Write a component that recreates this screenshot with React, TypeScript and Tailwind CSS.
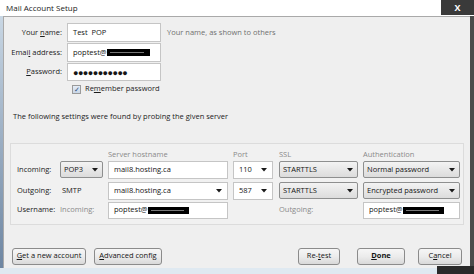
import React from "react";

const font = { fontFamily: '"Open Sans", "Noto Sans", sans-serif' };

function Arrow() {
  return (
    <svg width="6" height="4" viewBox="0 0 6 4" className="shrink-0">
      <path d="M0 0 L6 0 L3 3.5 Z" fill="#1a1a1a" />
    </svg>
  );
}

function Redacted({ w }: { w: number }) {
  return (
    <span className="relative inline-block h-[7px] bg-black align-middle" style={{ width: w }}>
      <span className="absolute left-[8%] right-[12%] top-[3px] h-px bg-[#777]" />
    </span>
  );
}

function Select({ w, children }: { w: number; children: React.ReactNode }) {
  return (
    <div
      className="flex h-[17px] items-center justify-between rounded-[2px] border border-[#8e8f8f] bg-gradient-to-b from-[#f3f3f3] to-[#dcdcdc] pl-[3px] pr-[4px] text-[#151515]"
      style={{ width: w }}
    >
      <span>{children}</span>
      <Arrow />
    </div>
  );
}

function Field({
  w,
  h = 17,
  arrow = false,
  children,
}: {
  w: number;
  h?: number;
  arrow?: boolean;
  children?: React.ReactNode;
}) {
  return (
    <div
      className="flex items-center justify-between border border-[#c5c5c5] bg-white pl-[5px] pr-[5px] text-[#151515]"
      style={{ width: w, height: h }}
    >
      <span className="flex items-center whitespace-nowrap">{children}</span>
      {arrow && <Arrow />}
    </div>
  );
}

function Btn({ w, children, bold = false }: { w: number; children: React.ReactNode; bold?: boolean }) {
  return (
    <div
      className={`flex h-[17px] items-center justify-center rounded-[3px] border border-[#8b8b8b] bg-gradient-to-b from-[#f6f6f6] via-[#ececec] to-[#d9d9d9] text-[#151515] ${bold ? "font-bold" : ""}`}
      style={{ width: w }}
    >
      {children}
    </div>
  );
}

export default function App() {
  return (
    <div className="relative h-[274px] w-[474px] overflow-hidden bg-[#dfe9f1] text-[7.5px] leading-none" style={font}>
      {/* title bar */}
      <div className="flex h-[16px] items-center bg-white pl-[6px] text-[8px] text-[#222]">Mail Account Setup</div>
      <div className="absolute right-0 top-0 flex h-[15px] w-[33px] items-center justify-center bg-[#3a3a3a] text-[9px] font-bold text-white">
        X
      </div>

      <div className="flex h-[252px]">
        <div className="w-[3px] bg-gradient-to-b from-[#c9d7e4] to-[#6e86a2]" />
        <div className="relative flex w-[467px] flex-col border-l border-t border-[#a9a9a9] bg-[#efefef]">
          {/* account fields */}
          <div className="flex flex-col gap-[1px] pt-[6px] text-[#1b1b1b]">
            <div className="flex h-[19px] items-center">
              <div className="w-[58px] text-right">
                Your <u>n</u>ame:
              </div>
              <div className="ml-[5px]">
                <Field w={94} h={19}>Test&nbsp; POP</Field>
              </div>
              <div className="ml-[6px] text-[#6f6f6f]">Your name, as shown to others</div>
            </div>
            <div className="flex h-[19px] items-center">
              <div className="w-[58px] text-right">
                Emai<u>l</u> address:
              </div>
              <div className="ml-[5px]">
                <Field w={94} h={19}>
                  poptest@<Redacted w={43} />
                </Field>
              </div>
            </div>
            <div className="flex h-[18px] items-center">
              <div className="w-[58px] text-right">
                <u>P</u>assword:
              </div>
              <div className="ml-[5px]">
                <Field w={94} h={18}>
                  <span className="text-[9px] tracking-[-0.5px]">●●●●●●●●●●●</span>
                </Field>
              </div>
            </div>
            <div className="mt-[2px] flex h-[10px] items-center pl-[68px]">
              <div className="flex h-[9px] w-[9px] items-center justify-center border border-[#9a9a9a] bg-gradient-to-b from-[#e4ecf6] to-[#c9d6e6] text-[7px] text-[#2c4e7a]">
                ✓
              </div>
              <div className="ml-[4px]">
                Re<u>m</u>ember password
              </div>
            </div>
          </div>

          <div className="mt-[19px] pl-[9px] text-[#1b1b1b]">The following settings were found by probing the given server</div>

          {/* server group */}
          <div className="ml-[6px] mt-[22px] h-[82px] w-[454px] border border-[#dcdcdc] bg-[#f1f1f1] pl-[6px] text-[#1b1b1b]">
            <div className="flex h-[17px] items-end pb-[2px] text-[#8a8a8a]">
              <div className="w-[91px]" />
              <div className="w-[125px]">Server hostname</div>
              <div className="w-[46px]">Port</div>
              <div className="w-[84px]">SSL</div>
              <div>Authentication</div>
            </div>
            <div className="flex h-[18px] items-center">
              <div className="w-[43px]">Incoming:</div>
              <div className="w-[48px]">
                <Select w={43}>POP3</Select>
              </div>
              <div className="w-[125px]">
                <Field w={120} h={18}>mail8.hosting.ca</Field>
              </div>
              <div className="w-[46px]">
                <Field w={40} h={18} arrow>
                  110
                </Field>
              </div>
              <div className="w-[84px]">
                <Select w={79}>STARTTLS</Select>
              </div>
              <Select w={97}>Normal password</Select>
            </div>
            <div className="mt-[3px] flex h-[18px] items-center">
              <div className="w-[43px]">Outgoing:</div>
              <div className="w-[48px] pl-[2px]">SMTP</div>
              <div className="w-[125px]">
                <Field w={120} h={18} arrow>
                  mail8.hosting.ca
                </Field>
              </div>
              <div className="w-[46px]">
                <Field w={40} h={18} arrow>
                  587
                </Field>
              </div>
              <div className="w-[84px]">
                <Select w={79}>STARTTLS</Select>
              </div>
              <Select w={97}>Encrypted password</Select>
            </div>
            <div className="mt-[2px] flex h-[17px] items-center">
              <div className="w-[43px]">Username:</div>
              <div className="w-[48px] text-[#8a8a8a]">Incoming:</div>
              <div className="w-[171px]">
                <Field w={120} h={17}>
                  poptest@<Redacted w={41} />
                </Field>
              </div>
              <div className="w-[84px] text-[#8a8a8a]">Outgoing:</div>
              <Field w={97} h={17}>
                poptest@<Redacted w={41} />
              </Field>
            </div>
          </div>

          {/* buttons */}
          <div className="mt-[23px] flex items-center pl-[8px]">
            <Btn w={74}>
              <span>
                <u>G</u>et a new account
              </span>
            </Btn>
            <div className="ml-[8px]">
              <Btn w={68}>
                <span>
                  <u>A</u>dvanced config
                </span>
              </Btn>
            </div>
            <div className="ml-[136px]">
              <Btn w={42}>
                <span>
                  Re-<u>t</u>est
                </span>
              </Btn>
            </div>
            <div className="ml-[17px]">
              <Btn w={48} bold>
                <span>
                  <u>D</u>one
                </span>
              </Btn>
            </div>
            <div className="ml-[13px]">
              <Btn w={44}>
                <span>
                  C<u>a</u>ncel
                </span>
              </Btn>
            </div>
          </div>
        </div>
        <div className="w-[4px] bg-[#4b4b4b]" />
      </div>
      <div className="absolute bottom-0 right-0 h-[8px] w-[37px] bg-[#2a2a2a]" />
    </div>
  );
}
